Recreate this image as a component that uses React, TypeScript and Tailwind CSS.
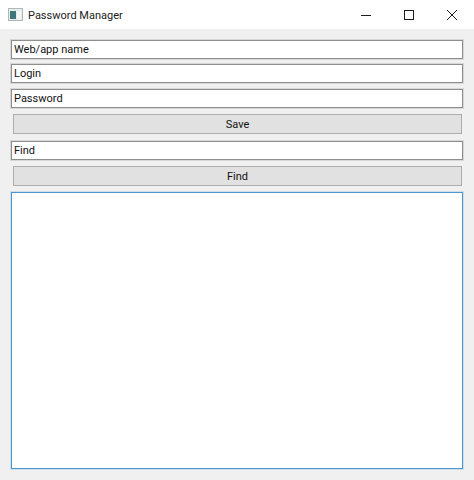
const font = "font-['Roboto',sans-serif]";

function Field({ placeholder, className = '' }: { placeholder: string; className?: string }) {
  return (
    <div className={`h-[19px] flex items-center bg-white border border-[#8e8e8e] shadow-[0_0_0_1px_rgba(170,170,170,0.35)] pl-[2px] pt-[2px] text-[11px] text-[#111] ${className}`}>
      {placeholder}
    </div>
  );
}

function Btn({ label, className = '' }: { label: string; className?: string }) {
  return (
    <button className={`h-[20px] ml-[2px] mr-[1px] pt-[2px] flex items-center justify-center bg-[#e1e1e1] border border-[#adadad] text-[11px] text-[#111] ${className}`}>
      {label}
    </button>
  );
}

export default function App() {
  return (
    <div className={`${font} w-[474px] h-[480px] flex flex-col bg-[#f0f0f0]`}>
      {/* Title bar */}
      <div className="h-[29px] bg-white flex items-center">
        <svg className="ml-[8px]" width="15" height="13" viewBox="0 0 15 13">
          <rect x="0.5" y="0.5" width="14" height="12" fill="#e6ecec" stroke="#aeb8b8" />
          <rect x="2" y="3" width="6" height="8" fill="#3f7478" />
          <rect x="9" y="3" width="4" height="8" fill="#f4f6f6" />
        </svg>
        <span className="ml-[5px] pt-[3px] text-[11px] text-[#222]">Password Manager</span>
        <div className="ml-auto flex items-center pr-[17px] gap-[33px]">
          <svg width="10" height="10" viewBox="0 0 10 10" stroke="#1c1c1c" fill="none">
            <path d="M0 5.5H10" />
          </svg>
          <svg width="10" height="10" viewBox="0 0 10 10" stroke="#1c1c1c" fill="none">
            <rect x="0.5" y="0.5" width="9" height="9" />
          </svg>
          <svg width="10" height="10" viewBox="0 0 10 10" stroke="#1c1c1c" fill="none">
            <path d="M0 0L10 10M10 0L0 10" />
          </svg>
        </div>
      </div>

      {/* Form */}
      <div className="flex-1 flex flex-col px-[11px] pt-[11px] pb-[11px]">
        <Field placeholder="Web/app name" />
        <Field placeholder="Login" className="mt-[5px]" />
        <Field placeholder="Password" className="mt-[6px]" />
        <Btn label="Save" className="mt-[6px]" />
        <Field placeholder="Find" className="mt-[7px]" />
        <Btn label="Find" className="mt-[6px]" />
        <div className="flex-1 mt-[6px] bg-white border border-[#4d96cf] shadow-[0_0_0_1px_rgba(77,150,207,0.2)]" />
      </div>
    </div>
  );
}
